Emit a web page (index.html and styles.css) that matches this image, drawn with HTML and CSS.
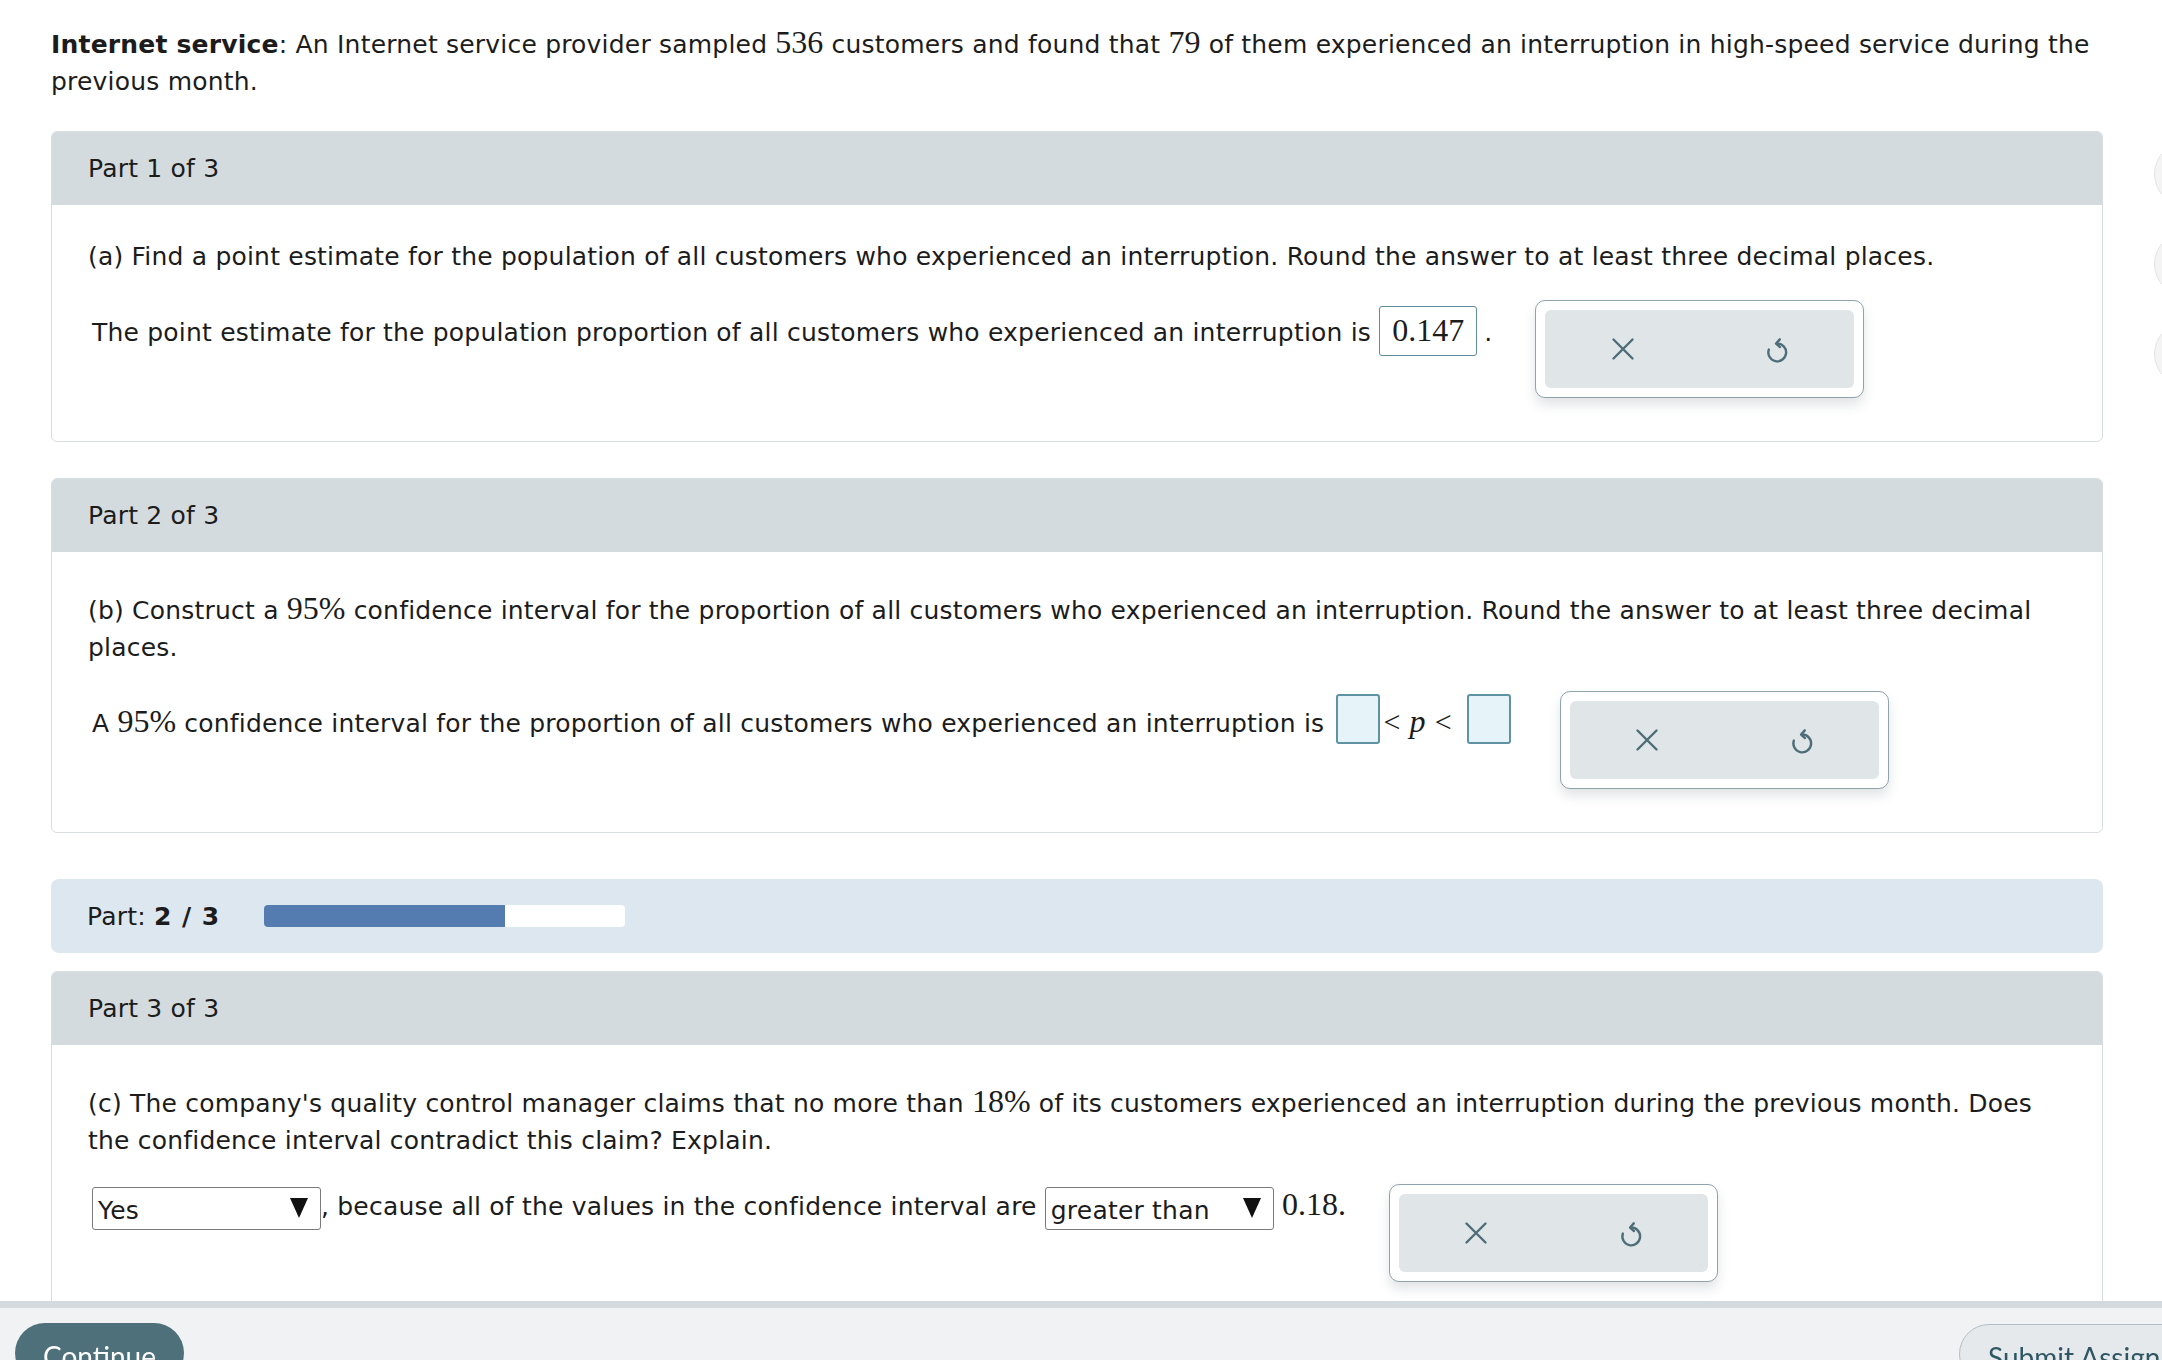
FILE: index.html
```html
<!DOCTYPE html>
<html lang="en">
<head>
<meta charset="utf-8">
<title>Internet service</title>
<link rel="stylesheet" href="styles.css">
</head>
<body>
<div class="page">
  <p class="intro"><b>Internet service</b>: An Internet service provider sampled <span class="m">536</span> customers and found that <span class="m">79</span> of them experienced an interruption in high-speed service during the previous month.</p>

  <section class="card">
    <div class="card-head">Part 1 of 3</div>
    <div class="card-body">
      <p class="q">(a) Find a point estimate for the population of all customers who experienced an interruption. Round the answer to at least three decimal places.</p>
      <div class="answer-row">
        <div class="answer-line">The point estimate for the population proportion of all customers who experienced an interruption is <span class="box filled">0.147</span><span class="dot">.</span></div>
        <div class="tools">
          <div class="tools-inner">
            <button class="tool" type="button" aria-label="Clear"><svg width="24" height="24" viewBox="0 0 24 24"><path d="M2.5 2.5 L21.5 21.5 M21.5 2.5 L2.5 21.5" fill="none" stroke="#4d6e78" stroke-width="2.4" stroke-linecap="round"/></svg></button>
            <button class="tool" type="button" aria-label="Undo"><svg width="24" height="30" viewBox="0 0 23 29"><path d="M11.5 9.2 A8.6 8.6 0 1 1 3.6 15" fill="none" stroke="#4d6e78" stroke-width="2.3" stroke-linecap="round"/><path d="M14.2 5.2 L10.6 9.2 L14.4 12.6" fill="none" stroke="#4d6e78" stroke-width="2.3" stroke-linecap="round" stroke-linejoin="round"/></svg></button>
          </div>
        </div>
      </div>
    </div>
  </section>

  <section class="card">
    <div class="card-head">Part 2 of 3</div>
    <div class="card-body">
      <p class="q">(b) Construct a <span class="m">95%</span> confidence interval for the proportion of all customers who experienced an interruption. Round the answer to at least three decimal places.</p>
      <div class="answer-row">
        <div class="answer-line interval-line">A <span class="m">95%</span> confidence interval for the proportion of all customers who experienced an interruption is <span class="box empty first"></span><span class="rel">&lt;</span><span class="var">p</span><span class="rel last">&lt;</span><span class="box empty end"></span></div>
        <div class="tools">
          <div class="tools-inner">
            <button class="tool" type="button" aria-label="Clear"><svg width="24" height="24" viewBox="0 0 24 24"><path d="M2.5 2.5 L21.5 21.5 M21.5 2.5 L2.5 21.5" fill="none" stroke="#4d6e78" stroke-width="2.4" stroke-linecap="round"/></svg></button>
            <button class="tool" type="button" aria-label="Undo"><svg width="24" height="30" viewBox="0 0 23 29"><path d="M11.5 9.2 A8.6 8.6 0 1 1 3.6 15" fill="none" stroke="#4d6e78" stroke-width="2.3" stroke-linecap="round"/><path d="M14.2 5.2 L10.6 9.2 L14.4 12.6" fill="none" stroke="#4d6e78" stroke-width="2.3" stroke-linecap="round" stroke-linejoin="round"/></svg></button>
          </div>
        </div>
      </div>
    </div>
  </section>

  <div class="progress">
    <span>Part: <b>2 / 3</b></span>
    <div class="bar"><div class="bar-fill" style="width:66.7%"></div></div>
  </div>

  <section class="card">
    <div class="card-head">Part 3 of 3</div>
    <div class="card-body">
      <p class="q">(c) The company's quality control manager claims that no more than <span class="m">18%</span> of its customers experienced an interruption during the previous month. Does the confidence interval contradict this claim? Explain.</p>
      <div class="answer-row">
        <div class="answer-line sel-line"><span class="select"><span>Yes</span><svg width="18" height="20" viewBox="0 0 18 20"><path d="M0 0 H18 L9 20 Z" fill="#111"/></svg></span>, because all of the values in the confidence interval are <span class="select"><span>greater than</span><svg width="18" height="20" viewBox="0 0 18 20"><path d="M0 0 H18 L9 20 Z" fill="#111"/></svg></span> <span class="m">0.18.</span></div>
        <div class="tools">
          <div class="tools-inner">
            <button class="tool" type="button" aria-label="Clear"><svg width="24" height="24" viewBox="0 0 24 24"><path d="M2.5 2.5 L21.5 21.5 M21.5 2.5 L2.5 21.5" fill="none" stroke="#4d6e78" stroke-width="2.4" stroke-linecap="round"/></svg></button>
            <button class="tool" type="button" aria-label="Undo"><svg width="24" height="30" viewBox="0 0 23 29"><path d="M11.5 9.2 A8.6 8.6 0 1 1 3.6 15" fill="none" stroke="#4d6e78" stroke-width="2.3" stroke-linecap="round"/><path d="M14.2 5.2 L10.6 9.2 L14.4 12.6" fill="none" stroke="#4d6e78" stroke-width="2.3" stroke-linecap="round" stroke-linejoin="round"/></svg></button>
          </div>
        </div>
      </div>
    </div>
  </section>
</div>

<div class="side-dock">
  <span class="dock-btn"></span>
  <span class="dock-btn"></span>
  <span class="dock-btn"></span>
</div>

<footer class="footer">
  <button class="btn-continue" type="button">Continue</button>
  <button class="btn-submit" type="button">Submit Assignment</button>
</footer>
</body>
</html>
```

FILE: styles.css
```css
html, body {
  margin: 0;
  padding: 0;
}

body {
  font-family: "DejaVu Sans", Verdana, sans-serif;
  font-size: 25px;
  letter-spacing: 0.2px;
  color: #1c1c1c;
  background: #ffffff;
  overflow: hidden;
}

.page {
  padding: 20px 59px 140px 51px;
}

.intro {
  margin: 0 0 31px;
  line-height: 36px;
}

.m {
  font-family: "Liberation Serif", "Times New Roman", serif;
  font-size: 32px;
  letter-spacing: 0;
  line-height: 44px;
}

.card {
  border: 1px solid #d8dde0;
  border-radius: 6px;
  margin-bottom: 36px;
}

.card-head {
  display: flex;
  align-items: center;
  height: 73px;
  padding-left: 36px;
  background: #d3dbdf;
  border-radius: 5px 5px 0 0;
}

.card-body {
  padding: 34px 36px 43px;
}

.q {
  margin: 0 0 25px;
  line-height: 36px;
}

.answer-row {
  display: flex;
  align-items: flex-start;
}

.answer-line {
  height: 50px;
  line-height: 50px;
  margin-top: 6px;
  padding-left: 4px;
  white-space: nowrap;
}

.interval-line {
  margin-top: 3px;
}

.answer-line .m {
  line-height: 1;
}

.box {
  display: inline-block;
  box-sizing: border-box;
  height: 50px;
  border-radius: 3px;
}

.box.filled {
  vertical-align: baseline;
  padding: 0 12px;
  border: 1px solid #5f8c9b;
  font-family: "Liberation Serif", "Times New Roman", serif;
  font-size: 32px;
  letter-spacing: 0;
  line-height: 47px;
  background: #fff;
}

.box.empty {
  vertical-align: -12px;
  width: 44px;
  border: 2px solid #5f93a4;
  background: #e6f3f8;
}

.box.empty.first {
  margin-left: 4px;
}

.box.empty.end {
  margin-right: 6px;
}

.dot {
  margin-left: 7px;
}

.rel {
  font-family: "Liberation Serif", "Times New Roman", serif;
  font-size: 30px;
  margin: 0 9px 0 3px;
}

.rel.last {
  margin: 0 15px 0 9px;
}

.var {
  font-family: "Liberation Serif", "Times New Roman", serif;
  font-style: italic;
  font-size: 32px;
}

.tools {
  flex: none;
  box-sizing: border-box;
  width: 329px;
  height: 98px;
  margin-left: 43px;
  padding: 9px;
  border: 1px solid #8fa3ab;
  border-radius: 10px;
  background: #fff;
  box-shadow: 0 7px 12px rgba(70, 90, 100, 0.16);
}

.tools-inner {
  display: flex;
  height: 100%;
  background: #e0e5e8;
  border-radius: 6px;
}

.tool {
  flex: 1;
  display: flex;
  align-items: center;
  justify-content: center;
  border: 0;
  padding: 0;
  background: transparent;
}

.progress {
  display: flex;
  align-items: center;
  gap: 44px;
  height: 74px;
  margin: 46px 0 18px;
  padding-left: 36px;
  background: #dde7f0;
  border-radius: 8px;
}

.progress b {
  letter-spacing: 1px;
}

.bar {
  width: 361px;
  height: 22px;
  background: #fff;
  border-radius: 4px;
  overflow: hidden;
}

.bar-fill {
  height: 100%;
  background: #547cb0;
}

.sel-line {
  height: 44px;
  line-height: 44px;
  margin-top: 1px;
}

.select {
  display: inline-flex;
  align-items: center;
  justify-content: space-between;
  vertical-align: middle;
  box-sizing: border-box;
  width: 229px;
  height: 43px;
  padding: 4px 12px 0 5px;
  border: 1px solid #7a7a7a;
  border-radius: 3px;
  background: #fff;
  line-height: 1;
}

.select svg {
  margin-top: -4px;
}

.side-dock {
  position: fixed;
  top: 142px;
  right: -56px;
  display: flex;
  flex-direction: column;
  gap: 26px;
}

.dock-btn {
  display: block;
  width: 62px;
  height: 62px;
  border-radius: 50%;
  background: #f4f4f4;
  border: 1px solid #e3e3e3;
}

.footer {
  position: fixed;
  left: 0;
  right: 0;
  bottom: 0;
  display: flex;
  align-items: flex-start;
  padding: 15px 0 0 15px;
  border-top: 7px solid #d3dbdf;
  background: #f0f2f3;
  box-sizing: content-box;
  height: 37px;
}

.btn-continue {
  width: 169px;
  height: 60px;
  border: 0;
  border-radius: 30px;
  background: #4e707a;
  color: #fff;
  font-family: Lato, "Open Sans", sans-serif;
  font-size: 28px;
  padding: 5px 0 0;
  line-height: 36px;
  text-align: center;
}

.btn-submit {
  margin-left: auto;
  margin-right: -112px;
  width: 315px;
  height: 60px;
  margin-top: 1px;
  border: 1px solid #b1c0c5;
  border-radius: 30px;
  background: #e5e9ec;
  color: #2e5663;
  font-family: Lato, "Open Sans", sans-serif;
  font-size: 28px;
  padding: 5px 0 0 28px;
  line-height: 36px;
  text-align: left;
  white-space: nowrap;
}
```
